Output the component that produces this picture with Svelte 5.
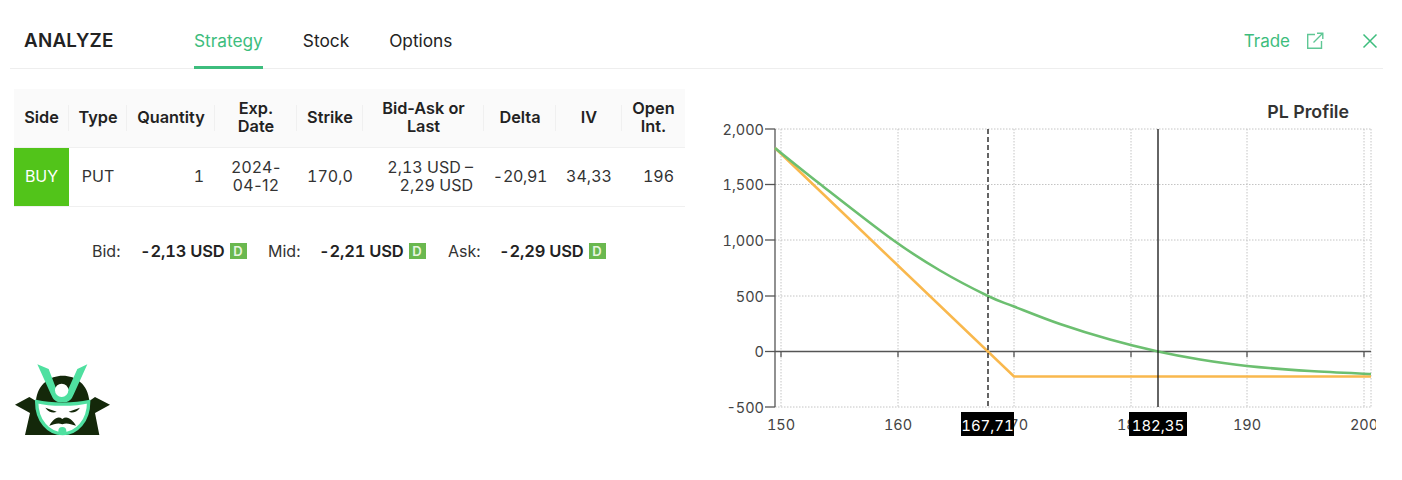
<script>
  const cols = [55, 58, 88, 82, 66, 121, 72, 66, 63];
  const xTicks = [[150, 781], [160, 898], [170, 1014], [180, 1131], [190, 1247], [200, 1364]];
  const yTicks = [['2,000', 129], ['1,500', 184.5], ['1,000', 240], ['500', 296], ['0', 351.5], ['-500', 407]];
  const green = [[775, 148], [820, 184], [893, 240], [940, 270.5], [988, 296], [1014, 306.5], [1060, 324], [1110, 339.5], [1158, 351.5], [1200, 359.5], [1247, 366], [1310, 371], [1371, 374]];
  function smooth(p) {
    let d = `M${p[0][0]},${p[0][1]}`;
    for (let i = 0; i < p.length - 1; i++) {
      const a = p[Math.max(i - 1, 0)], b = p[i], c = p[i + 1], e = p[Math.min(i + 2, p.length - 1)];
      d += ` C${b[0] + (c[0] - a[0]) / 6},${b[1] + (c[1] - a[1]) / 6} ${c[0] - (e[0] - b[0]) / 6},${c[1] - (e[1] - b[1]) / 6} ${c[0]},${c[1]}`;
    }
    return d;
  }
  const prices = [['Bid:', '-2,13 USD'], ['Mid:', '-2,21 USD'], ['Ask:', '-2,29 USD']];
</script>

<div class="page">
  <header class="top">
    <h1>ANALYZE</h1>
    <nav class="tabs">
      <span class="tab active">Strategy</span>
      <span class="tab">Stock</span>
      <span class="tab">Options</span>
    </nav>
    <div class="actions">
      <span class="trade">Trade</span>
      <svg class="ext" width="18" height="18" viewBox="0 0 18 18" fill="none" stroke="#5fc795" stroke-width="1.4">
        <path d="M9 2.5H1.7V16.3H15.5V9" />
        <path d="M7.5 10.5L16.5 1.5M11 1.2H16.8V7" />
      </svg>
      <svg class="close" width="16" height="16" viewBox="0 0 16 16" fill="none" stroke="#3dbd7d" stroke-width="1.5">
        <path d="M1.5 1.5L14.5 14.5M14.5 1.5L1.5 14.5" />
      </svg>
    </div>
  </header>

  <main class="body">
    <section class="left">
      <table>
        <colgroup>
          {#each cols as w}<col style:width="{w}px" />{/each}
        </colgroup>
        <thead>
          <tr>
            <th>Side</th><th>Type</th><th>Quantity</th><th>Exp.<br />Date</th><th>Strike</th>
            <th>Bid-Ask or<br />Last</th><th>Delta</th><th>IV</th><th>Open<br />Int.</th>
          </tr>
        </thead>
        <tbody>
          <tr>
            <td class="buy">BUY</td>
            <td class="c">PUT</td>
            <td class="r">1</td>
            <td class="c date">2024-<br />04-12</td>
            <td class="c">170,0</td>
            <td class="r">2,13 USD –<br />2,29 USD</td>
            <td class="c delta">-20,91</td>
            <td class="c">34,33</td>
            <td class="r">196</td>
          </tr>
        </tbody>
      </table>

      <div class="prices">
        {#each prices as [label, value]}
          <div class="price">
            <span class="label">{label}</span>
            <b>{value}</b>
            <span class="badge">D</span>
          </div>
        {/each}
      </div>

      <svg class="logo" width="130" height="110" viewBox="0 0 390 330">
        <path fill="#14280a" d="M45 191L88 168L108 180C112 130 150 104 188 104C228 104 264 130 268 180L285 168L330 191L285 216L298 282H75L90 216Z" />
        <path fill="#fff" stroke="#4fe0a0" stroke-width="10" d="M110 182C150 192 226 192 266 182C266 240 230 278 188 278C146 278 110 240 110 182Z" />
        <path fill="#14280a" d="M136 200L170 212C162 217 146 215 136 200ZM240 200L206 212C214 217 230 215 240 200ZM148 254C158 238 172 222 187 234C202 222 218 238 228 254C212 250 200 244 187 250C174 244 162 250 148 254Z" />
        <circle cx="187" cy="270" r="12" fill="#4fe0a0" />
        <path fill="#4fe0a0" d="M112 70L146 84L168 142C173 158 200 158 206 142L232 84L262 70L222 158C214 176 208 184 187 184C166 184 160 176 152 158Z" />
        <circle cx="185" cy="148" r="20" fill="#fff" />
      </svg>
    </section>

    <svg class="chart" width="676" height="360" viewBox="700 90 676 360">
      <text class="title" x="1349" y="118" text-anchor="end">PL Profile</text>
      {#each yTicks as [, y]}
        <line class="grid" x1="775" x2="1371" y1={y} y2={y} />
      {/each}
      {#each xTicks as [, x]}
        <line class="grid" x1={x} x2={x} y1="129" y2="407" />
      {/each}
      <line class="grid" x1="1371" x2="1371" y1="129" y2="407" />

      <line class="axis" x1="775" x2="775" y1="129" y2="407" />
      <line class="axis" x1="775" x2="1371" y1="351.5" y2="351.5" />
      {#each yTicks as [label, y]}
        <line class="axis" x1="765" x2="775" y1={y} y2={y} />
        <text class="tick" x="764" y={y + 5.5} text-anchor="end">{label}</text>
      {/each}
      {#each xTicks as [label, x]}
        <line class="axis" x1={x} x2={x} y1="351" y2="357" />
        <text class="tick" {x} y="430" text-anchor="middle">{label}</text>
      {/each}

      <path class="orange" d="M775,148 L1014,376.5 L1371,376.5" />
      <path class="green" d={smooth(green)} />

      <line class="mark dashed" x1="988" x2="988" y1="129" y2="407" />
      <line class="mark" x1="1158" x2="1158" y1="129" y2="407" />

      <rect x="961" y="412" width="53" height="24" />
      <text class="flag" x="987.5" y="431" text-anchor="middle">167,71</text>
      <rect x="1129" y="412" width="58" height="24" />
      <text class="flag" x="1158" y="431" text-anchor="middle">182,35</text>
    </svg>
  </main>
</div>

<style>
  :global(body) {
    margin: 0;
    background: #fff;
  }
  .page {
    width: 1402px;
    height: 480px;
    overflow: hidden;
    font-family: Inter, "Noto Sans", sans-serif;
    color: #222;
  }
  .top {
    display: flex;
    align-items: center;
    height: 69px;
    box-sizing: border-box;
    margin: 0 19px 0 10px;
    padding: 13px 4px 0 14px;
    border-bottom: 1px solid #eeeeee;
  }
  h1 {
    margin: 0;
    width: 170px;
    font-size: 18.8px;
    font-weight: 600;
    letter-spacing: 0.25px;
  }
  .tabs {
    display: flex;
    gap: 40px;
    align-self: flex-end;
    margin-bottom: -1px;
  }
  .tab {
    display: flex;
    align-items: center;
    font-size: 17.3px;
    height: 56px;
    padding-bottom: 1px;
    box-sizing: border-box;
  }
  .active {
    color: #3dbd7d;
    box-shadow: inset 0 -3px 0 #3dbd7d;
  }
  .actions {
    margin-left: auto;
    display: flex;
    align-items: center;
    color: #3dbd7d;
  }
  .trade {
    font-size: 17px;
  }
  .ext {
    margin-left: 16px;
  }
  .close {
    margin-left: 38px;
    margin-right: 1px;
  }
  .body {
    display: flex;
    padding: 20px 0 0 14px;
  }
  .left {
    width: 672px;
    flex: none;
  }
  table {
    width: 671px;
    table-layout: fixed;
    border-collapse: collapse;
    font-size: 16px;
    font-variant-numeric: tabular-nums;
  }
  th {
    height: 58px;
    padding: 0 0 2px;
    box-sizing: border-box;
    background: #fafafa;
    font-size: 16.3px;
    font-weight: 600;
    line-height: 18px;
    font-variant-numeric: normal;
    border-bottom: 1px solid #f0f0f0;
    position: relative;
  }
  th:not(:last-child)::after {
    content: "";
    position: absolute;
    right: 0;
    top: 16px;
    height: 26px;
    width: 1px;
    background: #f0f0f0;
  }
  td {
    height: 59px;
    padding: 0 11px 2px;
    box-sizing: border-box;
    line-height: 18px;
    color: #333;
    border-bottom: 1px solid #f0f0f0;
    text-align: center;
  }
  td.c { padding: 0 0 2px; }
  td.r { text-align: right; }
  td.date {
    font-variant-numeric: normal;
    letter-spacing: 0.5px;
  }
  td.delta { letter-spacing: -0.3px; }
  td.buy {
    background: #52c41a;
    color: #fff;
    padding: 0 0 2px;
  }
  .prices {
    display: flex;
    margin: 32px 0 0 78px;
    height: 24px;
    align-items: center;
    font-variant-numeric: tabular-nums;
  }
  .price {
    display: flex;
    align-items: center;
    width: 176px;
    font-size: 16.5px;
  }
  .price:nth-child(2) { width: 180px; }
  .label {
    width: 48px;
    color: #333;
    font-size: 16px;
  }
  .price:nth-child(n + 2) .label { width: 51px; }
  b {
    font-weight: 600;
    letter-spacing: -0.2px;
  }
  .badge {
    margin-left: 5px;
    width: 17px;
    height: 16px;
    background: #6ab84f;
    color: #e8f5e0;
    font-size: 13px;
    font-weight: 600;
    line-height: 16px;
    text-align: center;
  }
  .logo {
    display: block;
    margin: 78px 0 0 -14px;
  }
  .chart {
    flex: none;
    margin: 1px 0 0 14px;
  }
  .title {
    font: 600 17.8px Inter, sans-serif;
    fill: #333;
  }
  .tick {
    font: 14.5px Inter, sans-serif;
    font-variant-numeric: tabular-nums;
    fill: #444;
  }
  .grid {
    stroke: #c4c4c4;
    stroke-width: 1;
    stroke-dasharray: 1.5 1.5;
  }
  .axis {
    stroke: #555;
    stroke-width: 1.3;
  }
  .orange, .green {
    fill: none;
    stroke-width: 2.6;
  }
  .orange { stroke: #f9b84d; }
  .green { stroke: #6cbf70; }
  .mark {
    stroke: #111;
    stroke-width: 1.3;
  }
  .dashed { stroke-dasharray: 5 3; }
  .flag {
    font: 15px Inter, sans-serif;
    font-variant-numeric: tabular-nums;
    fill: #fff;
  }
</style>
